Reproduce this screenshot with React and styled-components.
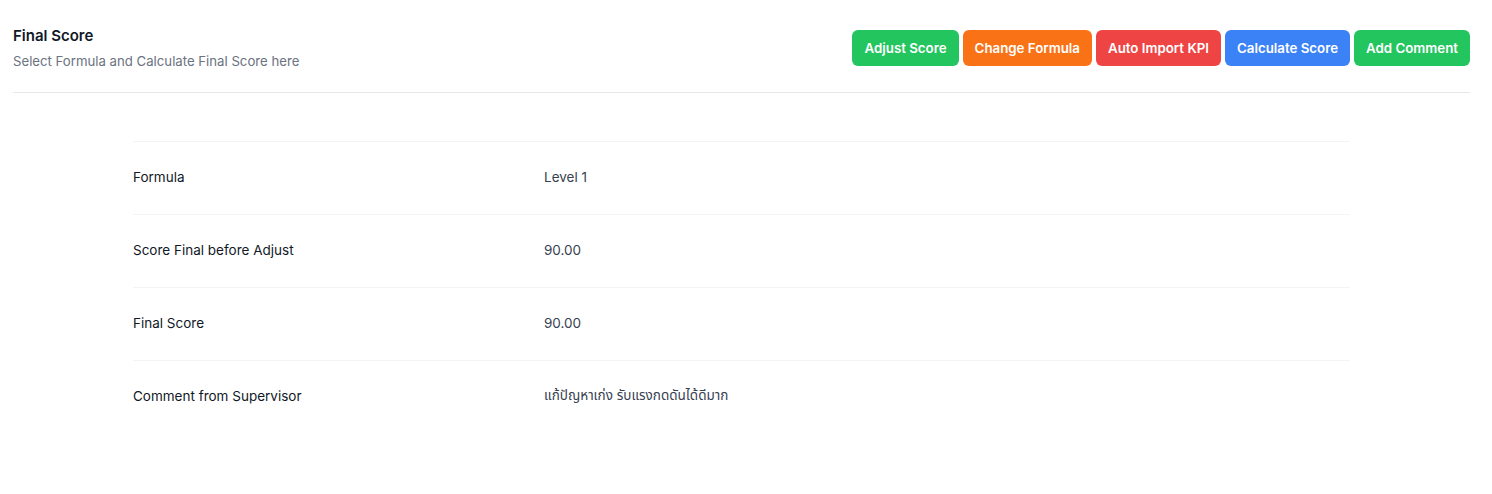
import React from "react";
import styled, { createGlobalStyle } from "styled-components";

const GlobalStyle = createGlobalStyle`
  * { box-sizing: border-box; }
  body {
    margin: 0;
    background: #ffffff;
    font-family: "Inter", "Noto Sans Thai", "Noto Sans", "DejaVu Sans", sans-serif;
    color: #111827;
  }
`;

const Page = styled.section`
  padding: 26px 22px 0 13px;
`;

const Header = styled.div`
  display: flex;
  justify-content: space-between;
  align-items: flex-start;
  padding-bottom: 21px;
  border-bottom: 1px solid #e5e7eb;
`;

const TitleBlock = styled.div`
  display: flex;
  flex-direction: column;
  gap: 5px;
`;

const Title = styled.h2`
  margin: 0;
  font-size: 15px;
  font-weight: 600;
  line-height: 20px;
  color: #111827;
`;

const Subtitle = styled.p`
  margin: 0;
  font-size: 13.2px;
  line-height: 20px;
  color: #6b7280;
`;

const Actions = styled.div`
  display: flex;
  gap: 4px;
  padding-top: 4px;
`;

const Button = styled.button`
  height: 36px;
  padding: 0 12px 1px;
  border: none;
  border-radius: 6px;
  background: ${(p) => p.$bg};
  color: #ffffff;
  font-family: inherit;
  font-size: 13.3px;
  font-weight: 600;
  cursor: pointer;
`;

const Table = styled.div`
  margin: 48px 120px 0;
`;

const Row = styled.div`
  display: grid;
  grid-template-columns: 411px 1fr;
  align-items: center;
  height: 73px;
  padding-bottom: 2px;
  border-top: 1px solid #f3f4f6;
  font-size: 13.5px;
`;

const Label = styled.div`
  color: #111827;
`;

const Value = styled.div`
  color: #374151;
`;

const buttons = [
  { label: "Adjust Score", bg: "#22c55e" },
  { label: "Change Formula", bg: "#f97316" },
  { label: "Auto Import KPI", bg: "#ef4444" },
  { label: "Calculate Score", bg: "#3b82f6" },
  { label: "Add Comment", bg: "#22c55e" },
];

const rows = [
  { label: "Formula", value: "Level 1" },
  { label: "Score Final before Adjust", value: "90.00" },
  { label: "Final Score", value: "90.00" },
  { label: "Comment from Supervisor", value: "แก้ปัญหาเก่ง รับแรงกดดันได้ดีมาก" },
];

export default function App() {
  return (
    <>
      <GlobalStyle />
      <Page>
        <Header>
          <TitleBlock>
            <Title>Final Score</Title>
            <Subtitle>Select Formula and Calculate Final Score here</Subtitle>
          </TitleBlock>
          <Actions>
            {buttons.map((b) => (
              <Button key={b.label} $bg={b.bg}>
                {b.label}
              </Button>
            ))}
          </Actions>
        </Header>
        <Table>
          {rows.map((r) => (
            <Row key={r.label}>
              <Label>{r.label}</Label>
              <Value>{r.value}</Value>
            </Row>
          ))}
        </Table>
      </Page>
    </>
  );
}
